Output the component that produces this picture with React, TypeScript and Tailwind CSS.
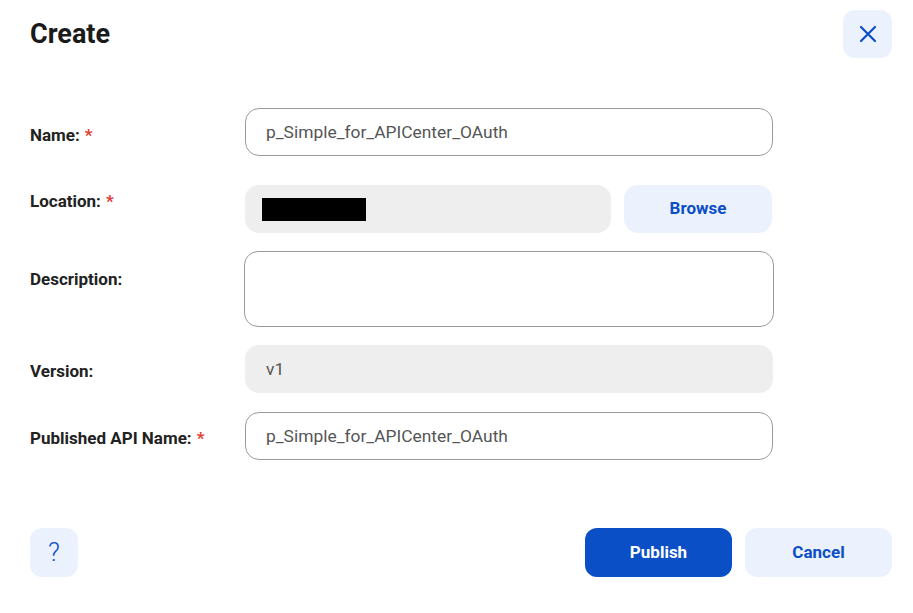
import React from "react";

const font = { fontFamily: "Roboto, 'Liberation Sans', sans-serif" };

function Label({ text, required, pt }: { text: string; required?: boolean; pt: string }) {
  return (
    <div className={`w-[215px] shrink-0 text-[17px] leading-[24px] font-bold text-[#222222] ${pt}`}>
      {text}
      {required && <span className="text-[#e53935] ml-[5px]">*</span>}
    </div>
  );
}

export default function App() {
  return (
    <div style={font} className="w-[913px] h-[613px] bg-white flex flex-col relative overflow-hidden">
      <div className="flex items-center justify-between pl-[30px] pr-[21px] pt-[10px] h-[58px]">
        <div className="text-[27px] leading-[32px] font-bold text-[#1a1a1a]">Create</div>
        <button className="w-[49px] h-[48px] rounded-[12px] bg-[#ebf2fe] flex items-center justify-center">
          <svg width="18" height="18" viewBox="0 0 18 18" fill="none">
            <path d="M2 2L16 16M16 2L2 16" stroke="#0b4fc7" strokeWidth="2.2" strokeLinecap="round" />
          </svg>
        </button>
      </div>

      <div className="flex flex-col pl-[30px] mt-[50px]">
        <div className="flex">
          <Label text="Name:" required pt="pt-[15px]" />
          <div className="w-[528px] h-[48px] rounded-[14px] border border-[#9a9a9a] flex items-center pl-[20px] text-[17.4px] text-[#555555]">
            p_Simple_for_APICenter_OAuth
          </div>
        </div>

        <div className="flex mt-[29px]">
          <Label text="Location:" required pt="pt-[4px]" />
          <div className="w-[366px] h-[48px] rounded-[14px] bg-[#eeeeee] flex items-center pl-[17px]">
            <div className="w-[104px] h-[23px] bg-black" />
          </div>
          <button className="ml-[13px] w-[148px] h-[48px] rounded-[14px] bg-[#ebf2fe] text-[#0b4fc7] font-bold text-[17px]">
            Browse
          </button>
        </div>

        <div className="flex mt-[18px]">
          <Label text="Description:" pt="pt-[16px]" />
          <div className="w-[530px] h-[76px] rounded-[14px] border border-[#9a9a9a] ml-[-1px]" />
        </div>

        <div className="flex mt-[18px]">
          <Label text="Version:" pt="pt-[14px]" />
          <div className="w-[528px] h-[48px] rounded-[14px] bg-[#eeeeee] flex items-center pl-[21px] text-[17.4px] text-[#555555]">
            v1
          </div>
        </div>

        <div className="flex mt-[19px]">
          <Label text="Published API Name:" required pt="pt-[14px]" />
          <div className="w-[528px] h-[48px] rounded-[14px] border border-[#9a9a9a] flex items-center pl-[20px] text-[17.4px] text-[#555555]">
            p_Simple_for_APICenter_OAuth
          </div>
        </div>
      </div>

      <div className="flex items-center justify-between pl-[30px] pr-[21px] mt-[68px]">
        <button className="w-[48px] h-[49px] rounded-[12px] bg-[#ebf2fe] text-[#0b4fc7] text-[26px] font-light flex items-center justify-center">
          ?
        </button>
        <div className="flex gap-[13px]">
          <button className="w-[147px] h-[49px] rounded-[12px] bg-[#0b4fc7] text-white font-bold text-[17px]">
            Publish
          </button>
          <button className="w-[147px] h-[49px] rounded-[12px] bg-[#ebf2fe] text-[#0b4fc7] font-bold text-[17px]">
            Cancel
          </button>
        </div>
      </div>
    </div>
  );
}
